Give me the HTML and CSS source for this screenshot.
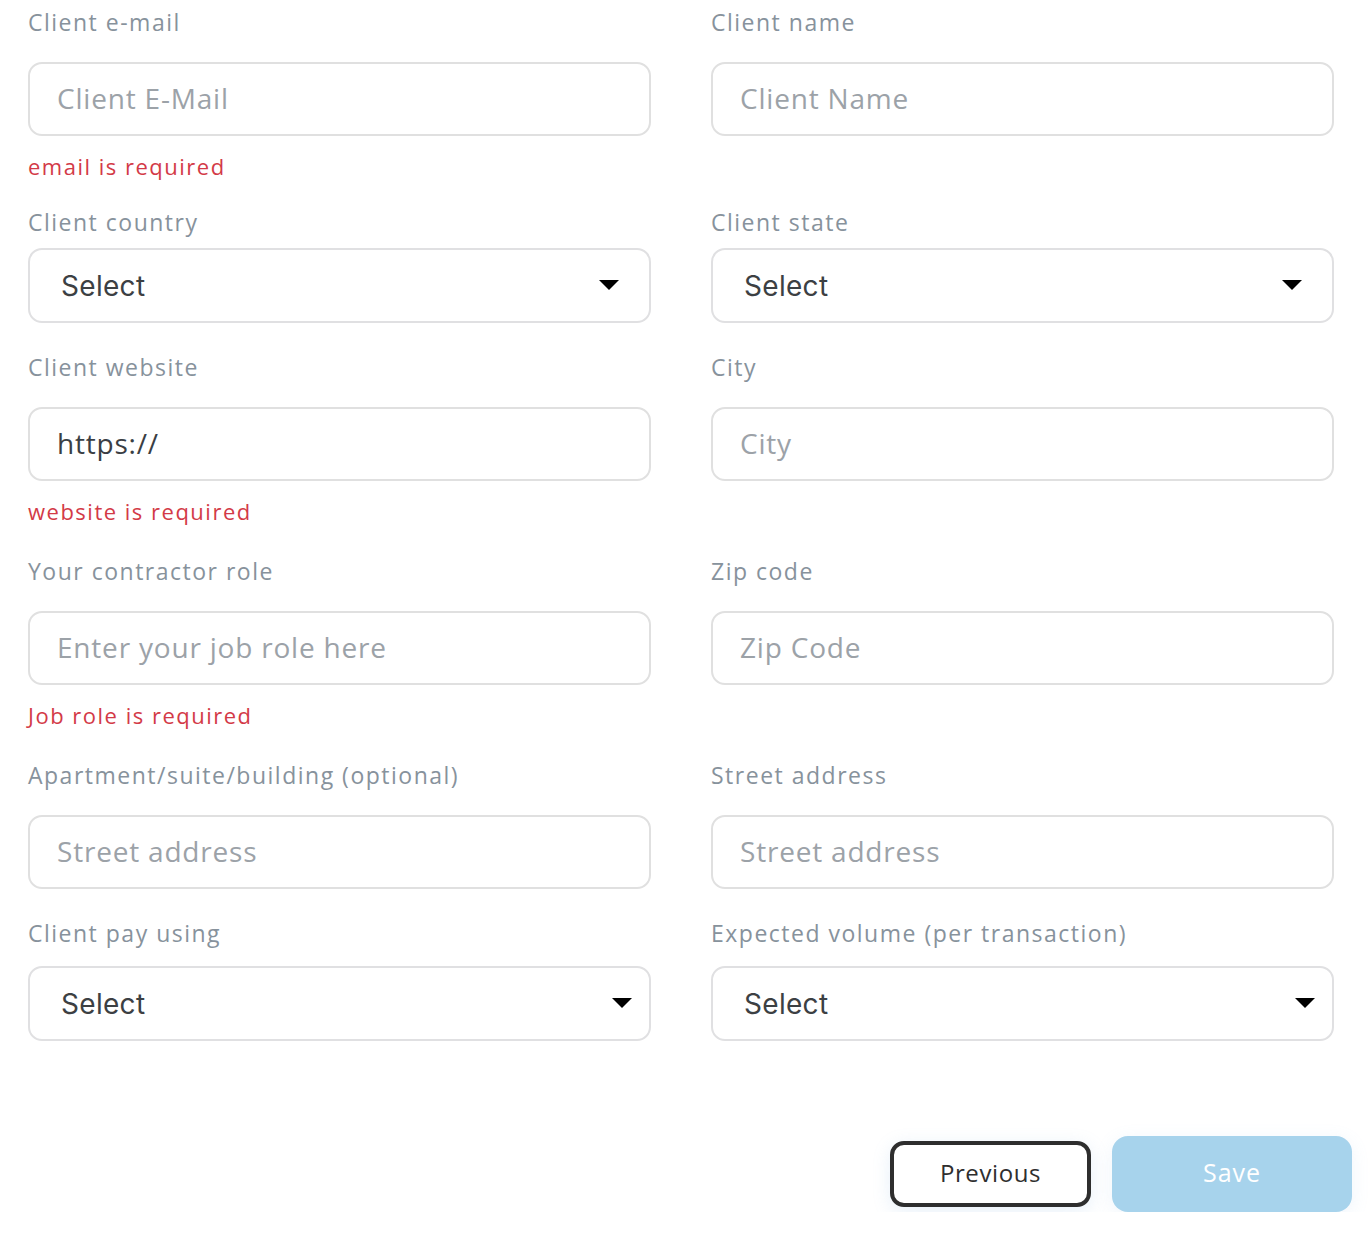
FILE: index.html
```html
<!DOCTYPE html>
<html lang="en">
<head>
<meta charset="utf-8">
<title>Client details</title>
<link rel="stylesheet" href="styles.css">
</head>
<body>
<div class="page">
  <div class="form">
    <div class="field">
      <label class="label">Client e-mail</label>
      <input class="input" type="text" placeholder="Client E-Mail">
      <div class="error error--first">email is required</div>
    </div>
    <div class="field">
      <label class="label">Client name</label>
      <input class="input" type="text" placeholder="Client Name">
    </div>

    <div class="field">
      <label class="label">Client country</label>
      <div class="select select--top">
        <span class="select-text">Select</span>
        <svg class="caret" width="20" height="10" viewBox="0 0 20 10"><path d="M0 0H20L10 10Z" fill="#000"/></svg>
      </div>
    </div>
    <div class="field">
      <label class="label">Client state</label>
      <div class="select select--top">
        <span class="select-text">Select</span>
        <svg class="caret" width="20" height="10" viewBox="0 0 20 10"><path d="M0 0H20L10 10Z" fill="#000"/></svg>
      </div>
    </div>

    <div class="field">
      <label class="label">Client website</label>
      <input class="input input--value" type="text" value="https://">
      <div class="error">website is required</div>
    </div>
    <div class="field">
      <label class="label">City</label>
      <input class="input" type="text" placeholder="City">
    </div>

    <div class="field">
      <label class="label">Your contractor role</label>
      <input class="input" type="text" placeholder="Enter your job role here">
      <div class="error">Job role is required</div>
    </div>
    <div class="field">
      <label class="label">Zip code</label>
      <input class="input" type="text" placeholder="Zip Code">
    </div>

    <div class="field">
      <label class="label">Apartment/suite/building (optional)</label>
      <input class="input" type="text" placeholder="Street address">
    </div>
    <div class="field">
      <label class="label">Street address</label>
      <input class="input" type="text" placeholder="Street address">
    </div>

    <div class="field">
      <label class="label">Client pay using</label>
      <div class="select select--bottom">
        <span class="select-text">Select</span>
        <svg class="caret" width="20" height="10" viewBox="0 0 20 10"><path d="M0 0H20L10 10Z" fill="#000"/></svg>
      </div>
    </div>
    <div class="field">
      <label class="label">Expected volume (per transaction)</label>
      <div class="select select--bottom">
        <span class="select-text">Select</span>
        <svg class="caret" width="20" height="10" viewBox="0 0 20 10"><path d="M0 0H20L10 10Z" fill="#000"/></svg>
      </div>
    </div>
  </div>

  <div class="actions">
    <button class="btn btn-prev" type="button">Previous</button>
    <button class="btn btn-save" type="button">Save</button>
  </div>
</div>
</body>
</html>
```

FILE: styles.css
```css
* { box-sizing: border-box; }

html, body {
  margin: 0;
  padding: 0;
  background: #ffffff;
}

body {
  font-family: "Open Sans", "Noto Sans", sans-serif;
  color: #3c4043;
}

.page {
  padding-top: 10px;
}

.form {
  display: grid;
  grid-template-columns: 1fr 1fr;
  column-gap: 60px;
  row-gap: 32px;
  padding: 0 34px 0 28px;
  align-items: start;
}

.field {
  display: flex;
  flex-direction: column;
}

.label {
  display: block;
  font-size: 23px;
  line-height: 24px;
  letter-spacing: 1.5px;
  color: #87929c;
  height: 24px;
  white-space: nowrap;
}

.input {
  display: block;
  width: 100%;
  height: 74px;
  margin-top: 28px;
  padding: 0 0 2px 27px;
  border: 2px solid #e0e0e0;
  border-radius: 14px;
  background: #fff;
  font-family: "Open Sans", "Noto Sans", sans-serif;
  font-size: 28px;
  letter-spacing: 0.8px;
  color: #3c4043;
  outline: none;
}

.input::placeholder {
  color: #9ca2a8;
  opacity: 1;
}

.input--value {
  color: #3a3e44;
}

.error {
  margin-top: 18px;
  margin-bottom: 4px;
  font-size: 22px;
  line-height: 24px;
  letter-spacing: 1.5px;
  color: #d33a47;
  white-space: nowrap;
}

.error--first {
  margin-bottom: 0;
}

.select {
  display: flex;
  align-items: center;
  justify-content: space-between;
  height: 75px;
  border: 2px solid #e0e0e2;
  border-radius: 14px;
  padding-left: 31px;
  background: #fff;
}

.select--top {
  margin-top: 14px;
  padding-right: 30px;
}

.select--bottom {
  margin-top: 21px;
  padding-right: 17px;
}

.select-text {
  font-family: Inter, Roboto, sans-serif;
  font-size: 28px;
  letter-spacing: 0.3px;
  color: #3c4043;
}

.caret {
  display: block;
  flex: none;
  margin-top: -2px;
}

.actions {
  display: flex;
  justify-content: flex-end;
  align-items: center;
  gap: 21px;
  margin-top: 95px;
  padding-right: 16px;
}

.btn {
  font-family: "Open Sans", "Noto Sans", sans-serif;
  font-size: 24px;
  letter-spacing: 0.6px;
  padding: 0 0 4px 0;
  cursor: pointer;
}

.btn-prev {
  width: 201px;
  height: 66px;
  border: 4px solid #2e2e2e;
  border-radius: 14px;
  background: #fff;
  color: #2e2e2e;
  box-shadow: 0 4px 18px rgba(120, 170, 220, 0.18);
}

.btn-save {
  width: 240px;
  height: 76px;
  border: none;
  border-radius: 16px;
  background: #a7d3ec;
  color: #ffffff;
  font-size: 25px;
  letter-spacing: 1px;
  box-shadow: 0 4px 18px rgba(120, 170, 220, 0.12);
}
```
